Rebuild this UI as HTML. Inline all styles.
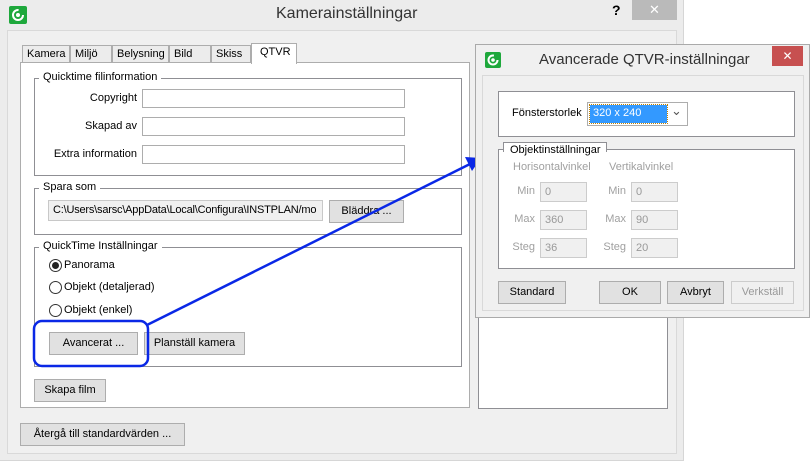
<!DOCTYPE html>
<html><head><meta charset="utf-8"><style>
*{box-sizing:border-box;margin:0;padding:0}
body{width:810px;height:461px;background:#fff;position:relative;overflow:hidden;font-family:"Liberation Sans",sans-serif;font-size:11px;color:#000}
.a{position:absolute}
.win{left:0;top:0;width:684px;height:461px;background:#ececec;border-right:1px solid #d6d6d6;border-bottom:1px solid #d6d6d6}
.panel{left:7px;top:30px;width:670px;height:424px;background:#f0f0f0;border:1px solid #d9d9d9}
.page{left:20px;top:62px;width:450px;height:346px;background:#fff;border:1px solid #adadad}
.tab{top:45px;height:18px;background:#ececec;border:1px solid #adadad;border-bottom:none;padding:2px 0 0 4px}
.grp{border:1px solid #8f8f94}
.leg{background:#fff;padding:0 4px;top:-8px;left:4px;white-space:nowrap}
.inp{background:#fff;border:1px solid #adadad}
.btn{background:#e1e1e1;border:1px solid #adadad;text-align:center;line-height:21px;white-space:nowrap}
.lbl{white-space:nowrap}
.r{text-align:right;white-space:nowrap}
.rad{width:13px;height:13px;border:1px solid #333;border-radius:50%;background:#fff}
.dlg{left:475px;top:44px;width:335px;height:274px;background:#f0f0f0;border:1px solid #aaa}
.gry{color:#a0a0a0}
.dis{background:#f0f0f0;border:1px solid #ccc;color:#999;padding:3px 4px}
.icon{width:18px;height:18px;background:#1ea83c;border-radius:2px}
</style></head><body>
<div class="a win"></div>
<div class="a icon" style="left:9px;top:6px"><svg width="18" height="18"><circle cx="9" cy="9" r="5" fill="none" stroke="#fff" stroke-width="2" stroke-dasharray="24 8"/><circle cx="9" cy="9" r="2" fill="#fff"/></svg></div>
<div class="a" style="left:276px;top:5px;font-size:16px;color:#333">Kamerainställningar</div>
<div class="a" style="left:612px;top:2px;font-weight:bold;font-size:14px">?</div>
<div class="a" style="left:632px;top:0;width:45px;height:20px;background:#bababa;color:#fff;text-align:center;font-size:13px;line-height:20px">✕</div>
<div class="a panel"></div>
<div class="a tab" style="left:22px;width:48px">Kamera</div>
<div class="a tab" style="left:70px;width:42px">Miljö</div>
<div class="a tab" style="left:112px;width:57px">Belysning</div>
<div class="a tab" style="left:169px;width:42px">Bild</div>
<div class="a tab" style="left:211px;width:40px">Skiss</div>
<div class="a page"></div>
<div class="a" style="left:251px;top:43px;width:46px;height:21px;background:#fff;border:1px solid #adadad;border-bottom:none;padding:2px 0 0 8px">QTVR</div>
<div class="a" style="left:478px;top:62px;width:190px;height:347px;background:#fff;border:1px solid #8f8f94"></div>

<div class="a grp" style="left:34px;top:78px;width:428px;height:98px"><div class="a leg">Quicktime filinformation</div></div>
<div class="a r" style="left:30px;width:107px;top:92px">Copyright</div>
<div class="a r" style="left:30px;width:107px;top:120px">Skapad av</div>
<div class="a r" style="left:30px;width:107px;top:148px">Extra information</div>
<div class="a inp" style="left:142px;top:89px;width:263px;height:19px"></div>
<div class="a inp" style="left:142px;top:117px;width:263px;height:19px"></div>
<div class="a inp" style="left:142px;top:145px;width:263px;height:19px"></div>

<div class="a grp" style="left:34px;top:188px;width:428px;height:47px"><div class="a leg">Spara som</div></div>
<div class="a" style="left:48px;top:200px;width:275px;height:21px;background:#f0f0f0;border:1px solid #c8c8c8;padding:3px 4px;white-space:nowrap;overflow:hidden;letter-spacing:-0.2px">C:\Users\sarsc\AppData\Local\Configura\INSTPLAN/mo</div>
<div class="a btn" style="left:329px;top:200px;width:75px;height:23px">Bläddra ...</div>

<div class="a grp" style="left:34px;top:247px;width:428px;height:120px"><div class="a leg">QuickTime Inställningar</div></div>
<div class="a rad" style="left:49px;top:259px"><div style="width:7px;height:7px;background:#222;border-radius:50%;margin:2px"></div></div>
<div class="a lbl" style="left:64px;top:259px">Panorama</div>
<div class="a rad" style="left:49px;top:281px"></div>
<div class="a lbl" style="left:64px;top:281px">Objekt (detaljerad)</div>
<div class="a rad" style="left:49px;top:304px"></div>
<div class="a lbl" style="left:64px;top:304px">Objekt (enkel)</div>
<div class="a btn" style="left:49px;top:332px;width:89px;height:23px">Avancerat ...</div>
<div class="a btn" style="left:144px;top:332px;width:101px;height:23px">Planställ kamera</div>
<div class="a btn" style="left:34px;top:379px;width:72px;height:23px">Skapa film</div>
<div class="a btn" style="left:20px;top:423px;width:165px;height:23px">Återgå till standardvärden ...</div>

<svg class="a" style="left:0;top:0" width="810" height="461">
<rect x="34" y="321" width="114" height="45" rx="8" fill="none" stroke="#0a28e6" stroke-width="2.5"/>
<line x1="147" y1="325" x2="470" y2="164" stroke="#0a28e6" stroke-width="2.5"/>
<polygon points="481,158 465,157 472,171" fill="#0a28e6"/>
</svg>

<div class="a dlg"></div>
<div class="a" style="left:482px;top:75px;width:322px;height:236px;border:1px solid #d9d9d9"></div>
<div class="a icon" style="left:485px;top:52px;width:16px;height:16px"><svg width="16" height="16"><circle cx="8" cy="8" r="4.5" fill="none" stroke="#fff" stroke-width="2" stroke-dasharray="22 7"/><circle cx="8" cy="8" r="1.8" fill="#fff"/></svg></div>
<div class="a" style="left:539px;top:51px;font-size:15px;color:#333">Avancerade QTVR-inställningar</div>
<div class="a" style="left:772px;top:46px;width:31px;height:20px;background:#c75050;color:#fff;text-align:center;line-height:20px;font-size:12px">✕</div>
<div class="a" style="left:498px;top:91px;width:297px;height:46px;background:#fff;border:1px solid #8f8f94"></div>
<div class="a lbl" style="left:512px;top:107px">Fönsterstorlek</div>
<div class="a" style="left:587px;top:102px;width:101px;height:24px;background:#fff;border:1px solid #adadad"></div>
<div class="a" style="left:590px;top:105px;width:77px;height:18px;background:#3399ff;color:#fff;padding:2px 3px;outline:1px dotted #c08000">320 x 240</div>
<div class="a" style="left:671px;top:103px;color:#555;font-size:13px">⌄</div>
<div class="a" style="left:498px;top:149px;width:297px;height:120px;background:#fff;border:1px solid #8f8f94"></div>
<div class="a" style="left:503px;top:142px;width:104px;height:10px;background:#fff;border:1px solid #8f8f94;border-bottom:none"></div>
<div class="a lbl" style="left:510px;top:144px">Objektinställningar</div>
<div class="a lbl gry" style="left:513px;top:161px">Horisontalvinkel</div>
<div class="a lbl gry" style="left:609px;top:161px">Vertikalvinkel</div>
<div class="a gry r" style="left:500px;width:35px;top:185px">Min</div>
<div class="a gry r" style="left:500px;width:35px;top:213px">Max</div>
<div class="a gry r" style="left:500px;width:35px;top:241px">Steg</div>
<div class="a gry r" style="left:590px;width:36px;top:185px">Min</div>
<div class="a gry r" style="left:590px;width:36px;top:213px">Max</div>
<div class="a gry r" style="left:590px;width:36px;top:241px">Steg</div>
<div class="a dis" style="left:540px;top:182px;width:47px;height:20px">0</div>
<div class="a dis" style="left:540px;top:210px;width:47px;height:20px">360</div>
<div class="a dis" style="left:540px;top:238px;width:47px;height:20px">36</div>
<div class="a dis" style="left:631px;top:182px;width:47px;height:20px">0</div>
<div class="a dis" style="left:631px;top:210px;width:47px;height:20px">90</div>
<div class="a dis" style="left:631px;top:238px;width:47px;height:20px">20</div>
<div class="a btn" style="left:498px;top:281px;width:68px;height:23px">Standard</div>
<div class="a btn" style="left:599px;top:281px;width:62px;height:23px">OK</div>
<div class="a btn" style="left:667px;top:281px;width:57px;height:23px">Avbryt</div>
<div class="a btn" style="left:731px;top:281px;width:63px;height:23px;background:#f0f0f0;border-color:#ccc;color:#999">Verkställ</div>
</body></html>
